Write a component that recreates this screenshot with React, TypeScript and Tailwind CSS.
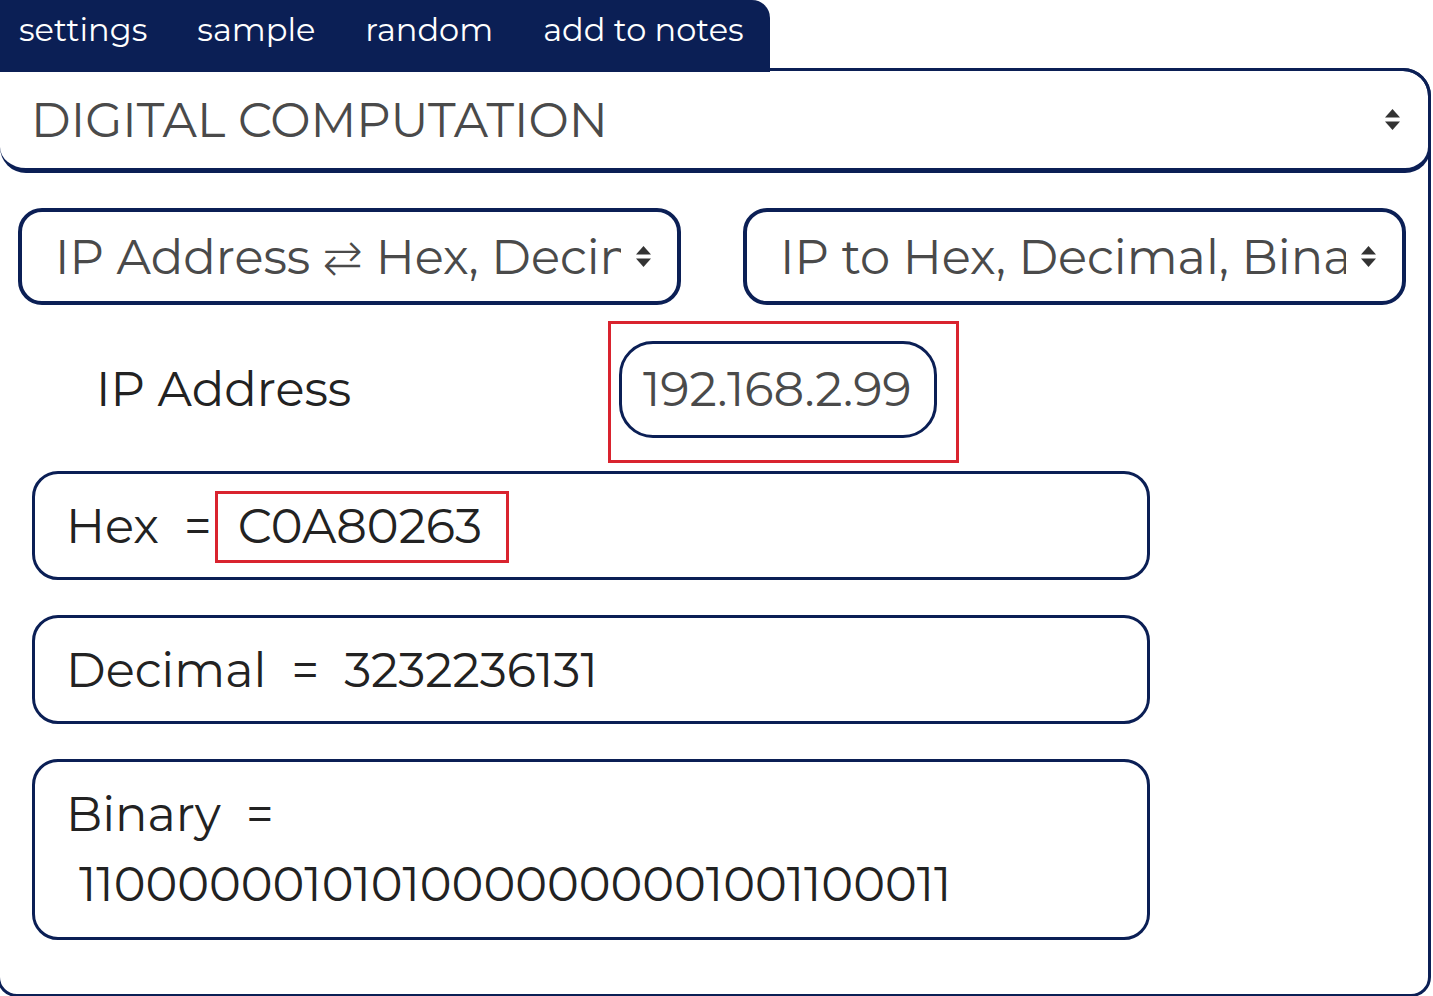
import React from "react";

const NAVY = "border-[#0b1f55]";

function UpDown({ className = "" }: { className?: string }) {
  return (
    <svg width="15" height="21" viewBox="0 0 15 21" className={className}>
      <polygon points="7.5,0 15,8.5 0,8.5" fill="#333" />
      <polygon points="0,12.5 15,12.5 7.5,21" fill="#333" />
    </svg>
  );
}

function SubSelect({ children }: { children: React.ReactNode }) {
  return (
    <div
      className={`relative flex h-[97px] w-[663px] items-center rounded-[24px] border-[4px] ${NAVY} pl-[33px] pr-[56px]`}
    >
      <span className="overflow-hidden whitespace-nowrap text-[48px] text-[#4a4a4a]">{children}</span>
      <UpDown className="absolute right-[26px] top-[34px]" />
    </div>
  );
}

function ResultBox({ children, tall }: { children: React.ReactNode; tall?: boolean }) {
  return (
    <div
      className={`ml-[32px] w-[1118px] rounded-[26px] border-[3px] ${NAVY} pl-[31px] text-[48px] text-[#222] ${
        tall ? "h-[181px] pt-[24px]" : "flex h-[109px] items-center"
      }`}
    >
      {children}
    </div>
  );
}

export default function App() {
  return (
    <div
      className="h-[996px] w-[1433px] overflow-hidden bg-white"
      style={{ fontFamily: '"Montserrat", Inter, "Noto Sans", sans-serif' }}
    >
      {/* tabs */}
      <div className="flex h-[72px] w-[770px] items-start gap-[50px] rounded-tr-[18px] bg-[#0b1f55] pl-[19px] pt-[6px] text-[32px] text-white">
        <span>settings</span>
        <span>sample</span>
        <span>random</span>
        <span>add to notes</span>
      </div>

      {/* card */}
      <div
        className={`-ml-[3px] -mt-[4px] h-[929px] w-[1434px] rounded-tr-[28px] rounded-b-[20px] border-[3px] ${NAVY}`}
      >
        <div
          className={`relative -mr-[3px] -mt-[3px] flex h-[105px] items-center rounded-tr-[28px] rounded-b-[26px] border-t-[3px] border-r-[3px] border-b-[5px] ${NAVY} pl-[31px]`}
        >
          <span className="text-[48px] uppercase text-[#4a4a4a]">Digital Computation</span>
          <UpDown className="absolute right-[28px] top-[38px]" />
        </div>

        <div className="mt-[35px] flex gap-[62px] pl-[18px]">
          <SubSelect>
            IP Address{" "}
            <span style={{ fontFamily: '"DejaVu Sans", sans-serif' }} className="font-light">
              ⇄
            </span>{" "}
            Hex, Decimal, Binary
          </SubSelect>
          <SubSelect>IP to Hex, Decimal, Binary</SubSelect>
        </div>

        <div className="mt-[16px] flex items-start">
          <div className="flex h-[142px] w-[608px] items-center pb-[6px] pl-[96px] text-[48px] text-[#222]">
            IP Address
          </div>
          <div className="h-[142px] w-[351px] border-[3px] border-[#d9232e] pl-[8px] pt-[17px]">
            <div
              className={`flex h-[97px] w-[318px] items-center rounded-[34px] border-[3px] ${NAVY} pb-[2px] pl-[21px] text-[48px] text-[#4a4a4a]`}
            >
              192.168.2.99
            </div>
          </div>
        </div>

        <div className="mt-[8px] flex flex-col gap-[35px]">
          <ResultBox>
            <span className="whitespace-pre">Hex  =</span>
            <span className="ml-[3px] mt-[3px] flex h-[72px] items-center border-[3px] border-[#d9232e] pb-[3px] pl-[20px] pr-[24px]">
              C0A80263
            </span>
          </ResultBox>
          <ResultBox>
            <span className="whitespace-pre">Decimal  =  3232236131</span>
          </ResultBox>
          <ResultBox tall>
            <div className="whitespace-pre leading-[56px]">Binary  =</div>
            <div className="mt-[14px] pl-[13px] leading-[56px]">11000000101010000000001001100011</div>
          </ResultBox>
        </div>
      </div>
    </div>
  );
}
